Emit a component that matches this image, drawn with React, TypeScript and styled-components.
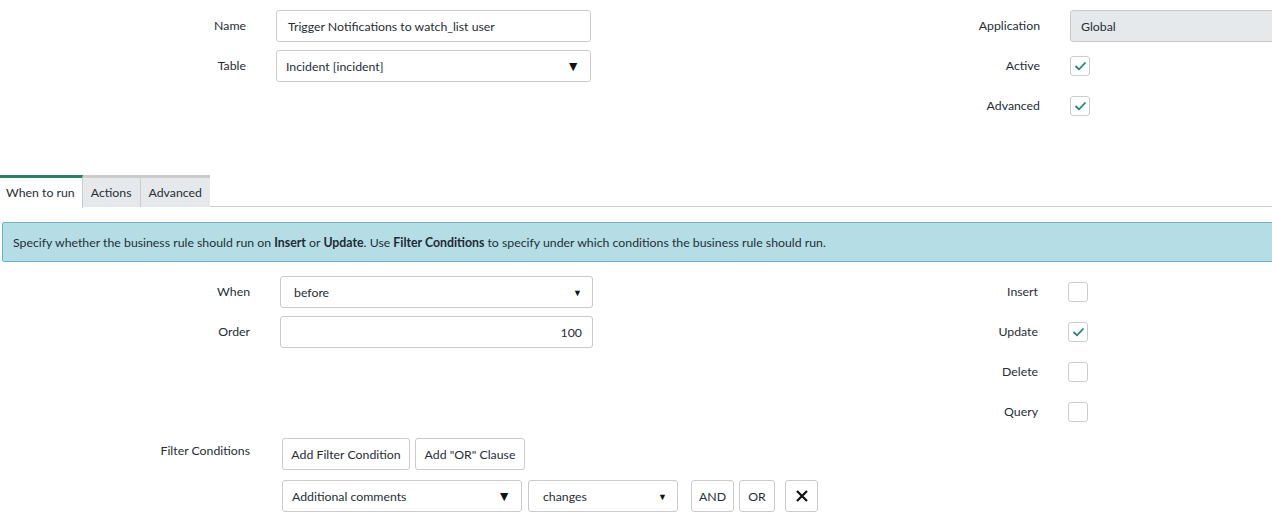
import React from "react";
import styled, { createGlobalStyle } from "styled-components";

const Global = createGlobalStyle`
  html, body { margin: 0; padding: 0; background: #fff; overflow: hidden; }
  body { font-family: Lato, "Noto Sans", sans-serif; font-size: 12.3px; color: #262e36; }
  * { box-sizing: border-box; }
`;

const Page = styled.div`
  width: 1272px;
  height: 525px;
  overflow: hidden;
`;

const TopSection = styled.div`
  display: flex;
  padding-top: 10px;
`;

const Column = styled.div<{ $w: number; $label: number; $gap: number }>`
  width: ${(p) => p.$w}px;
  display: flex;
  flex-direction: column;
  gap: 8px;
  --label-w: ${(p) => p.$label}px;
  --gap: ${(p) => p.$gap}px;
`;

const Row = styled.div`
  display: flex;
  align-items: center;
  height: 32px;
  gap: var(--gap);
`;

const Label = styled.div`
  width: var(--label-w);
  flex: none;
  text-align: right;
  white-space: nowrap;
  padding-bottom: 1px;
`;

const Field = styled.div<{ $w: number; $right?: boolean; $ro?: boolean; $pl?: number }>`
  width: ${(p) => p.$w}px;
  flex: none;
  height: 32px;
  border: 1px solid #cbcbcb;
  border-radius: 3px;
  background: ${(p) => (p.$ro ? "#e6e9eb" : "#fff")};
  display: flex;
  align-items: center;
  justify-content: ${(p) => (p.$right ? "flex-end" : "space-between")};
  padding: 0 10px 0 ${(p) => p.$pl ?? 10}px;
  white-space: nowrap;
`;

const Arrow = styled.span<{ $big?: boolean }>`
  font-size: ${(p) => (p.$big ? "14px" : "9px")};
  color: #111;
  line-height: 1;
`;

const Check = styled.div`
  width: 20px;
  height: 20px;
  border: 1px solid #cbcbcb;
  border-radius: 3px;
  background: #fff;
  display: flex;
  align-items: center;
  justify-content: center;
  flex: none;
`;

const Tick = () => (
  <svg width="13" height="10" viewBox="0 0 13 10">
    <polyline points="1.5,5 5,8.3 11.5,1.5" fill="none" stroke="#1f8476" strokeWidth="1.8" />
  </svg>
);

const Box = ({ on }: { on?: boolean }) => <Check>{on && <Tick />}</Check>;

const Tabs = styled.div`
  display: flex;
  margin-top: 53px;
  border-bottom: 1px solid #cccccc;
  height: 32px;
`;

const Tab = styled.div<{ $active?: boolean }>`
  padding: ${(p) => (p.$active ? "0 7px 1px 6px" : "0 8px")};
  display: flex;
  align-items: center;
  border-top: 3px solid ${(p) => (p.$active ? "#278062" : "#cccccc")};
  background: ${(p) => (p.$active ? "#fff" : "#e6e9eb")};
  border-right: 1px solid #cccccc;
  margin-bottom: ${(p) => (p.$active ? "-1px" : "0")};
  height: ${(p) => (p.$active ? "33px" : "32px")};
  &:last-child { border-right: none; }
`;

const Banner = styled.div`
  margin: 15px 0 0 2px;
  width: 1280px;
  height: 40px;
  background: #b4dde5;
  border: 1px solid #63b7ca;
  border-radius: 2px;
  display: flex;
  align-items: center;
  padding-left: 10px;
  b { font-weight: 700; color: #1f2a33; }
`;

const Section = styled.div`
  display: flex;
  margin-top: 14px;
`;

const FilterRow = styled.div`
  display: flex;
  margin-top: 10px;
`;

const FilterLabel = styled.div`
  width: 250px;
  text-align: right;
  padding-top: 5px;
  flex: none;
`;

const FilterBody = styled.div`
  margin-left: 32px;
  display: flex;
  flex-direction: column;
  gap: 10px;
`;

const BtnRow = styled.div`
  display: flex;
  gap: 5px;
  align-items: center;
`;

const Button = styled.div<{ $w: number; $ml?: number }>`
  width: ${(p) => p.$w}px;
  margin-left: ${(p) => p.$ml ?? 0}px;
  height: 32px;
  border: 1px solid #cbcbcb;
  border-radius: 3px;
  background: #fff;
  display: flex;
  align-items: center;
  justify-content: center;
  white-space: nowrap;
  flex: none;
`;

const XIcon = () => (
  <svg width="14" height="14" viewBox="0 0 14 14">
    <path d="M2 2 L12 12 M12 2 L2 12" stroke="#111" strokeWidth="2.2" />
  </svg>
);

export default function App() {
  return (
    <Page>
      <Global />
      <TopSection>
        <Column $w={636} $label={246} $gap={30}>
          <Row>
            <Label>Name</Label>
            <Field $w={315} $pl={11}>Trigger Notifications to watch_list user</Field>
          </Row>
          <Row>
            <Label>Table</Label>
            <Field $w={315} $pl={9}>
              Incident [incident]
              <Arrow $big>▼</Arrow>
            </Field>
          </Row>
        </Column>
        <Column $w={636} $label={404} $gap={30}>
          <Row>
            <Label>Application</Label>
            <Field $w={230} $ro>Global</Field>
          </Row>
          <Row>
            <Label>Active</Label>
            <Box on />
          </Row>
          <Row>
            <Label>Advanced</Label>
            <Box on />
          </Row>
        </Column>
      </TopSection>

      <Tabs>
        <Tab $active>When to run</Tab>
        <Tab>Actions</Tab>
        <Tab>Advanced</Tab>
      </Tabs>

      <Banner>
        <span>
          Specify whether the business rule should run on <b>Insert</b> or <b>Update</b>. Use{" "}
          <b>Filter Conditions</b> to specify under which conditions the business rule should run.
        </span>
      </Banner>

      <Section>
        <Column $w={636} $label={250} $gap={30}>
          <Row>
            <Label>When</Label>
            <Field $w={313} $pl={13}>
              before
              <Arrow>▼</Arrow>
            </Field>
          </Row>
          <Row>
            <Label>Order</Label>
            <Field $w={313} $right>100</Field>
          </Row>
        </Column>
        <Column $w={636} $label={402} $gap={30}>
          <Row>
            <Label>Insert</Label>
            <Box />
          </Row>
          <Row>
            <Label>Update</Label>
            <Box on />
          </Row>
          <Row>
            <Label>Delete</Label>
            <Box />
          </Row>
          <Row>
            <Label>Query</Label>
            <Box />
          </Row>
        </Column>
      </Section>

      <FilterRow>
        <FilterLabel>Filter Conditions</FilterLabel>
        <FilterBody>
          <BtnRow>
            <Button $w={128}>Add Filter Condition</Button>
            <Button $w={110}>Add "OR" Clause</Button>
          </BtnRow>
          <BtnRow>
            <Field $w={240} $pl={9}>
              Additional comments
              <Arrow $big>▼</Arrow>
            </Field>
            <Field $w={150} $pl={14} style={{ marginLeft: 1 }}>
              changes
              <Arrow>▼</Arrow>
            </Field>
            <Button $w={43} $ml={8}>AND</Button>
            <Button $w={36}>OR</Button>
            <Button $w={33} $ml={5}>
              <XIcon />
            </Button>
          </BtnRow>
        </FilterBody>
      </FilterRow>
    </Page>
  );
}
